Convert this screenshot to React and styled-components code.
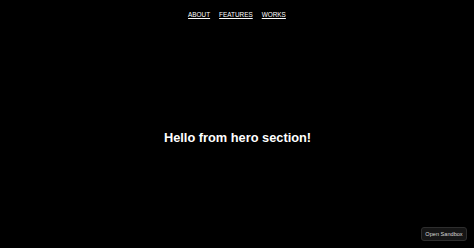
import React from "react";
import styled, { createGlobalStyle } from "styled-components";

const Global = createGlobalStyle`
  html, body { margin: 0; padding: 0; background: #000; }
  body { font-family: "Liberation Sans", Arial, sans-serif; color: #fff; }
`;

const Page = styled.div`
  height: 100vh;
  display: flex;
  flex-direction: column;
  background: #000;
`;

const Nav = styled.nav`
  height: 26px;
  box-sizing: border-box;
  padding-top: 10.5px;
  display: flex;
  justify-content: center;
  gap: 9px;
`;

const NavLink = styled.a`
  color: #fff;
  font-size: 6.4px;
  line-height: normal;
  text-decoration: underline;
  text-underline-offset: 0.5px;
`;

const Hero = styled.section`
  flex: 1;
  display: flex;
  align-items: center;
  justify-content: center;
`;

const Title = styled.h1`
  margin: 0;
  font-size: 12.8px;
  font-weight: 700;
  line-height: normal;
  color: #fff;
  padding-left: 1px;
`;

const SandboxButton = styled.button`
  position: fixed;
  right: 7px;
  bottom: 7px;
  width: 46px;
  height: 14px;
  padding: 0;
  background: #151515;
  border: 1px solid #2e2e2e;
  border-radius: 3px;
  color: #d8d8d8;
  font-family: "Liberation Sans", Arial, sans-serif;
  font-size: 5.6px;
  display: flex;
  align-items: center;
  justify-content: center;
`;

export default function App() {
  return (
    <>
      <Global />
      <Page>
        <Nav>
          <NavLink href="#about">ABOUT</NavLink>
          <NavLink href="#features">FEATURES</NavLink>
          <NavLink href="#works">WORKS</NavLink>
        </Nav>
        <Hero>
          <Title>Hello from hero section!</Title>
        </Hero>
      </Page>
      <SandboxButton>Open Sandbox</SandboxButton>
    </>
  );
}
